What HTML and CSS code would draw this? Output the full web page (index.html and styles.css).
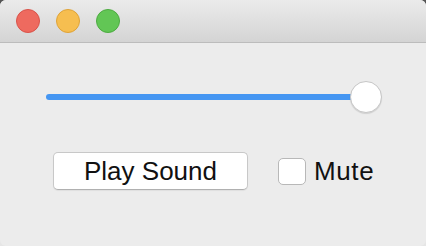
FILE: index.html
```html
<!DOCTYPE html>
<html>
<head>
<meta charset="utf-8">
<link rel="stylesheet" href="styles.css">
</head>
<body>
<div class="window">
  <div class="titlebar">
    <span class="light red"></span>
    <span class="light yellow"></span>
    <span class="light green"></span>
  </div>
  <div class="content">
    <div class="slider">
      <div class="track"></div>
      <div class="knob"></div>
    </div>
    <div class="controls">
      <button class="btn">Play Sound</button>
      <label class="check"><span class="box"></span><span class="label">Mute</span></label>
    </div>
  </div>
</div>
</body>
</html>
```

FILE: styles.css
```css
html, body {
  margin: 0;
  padding: 0;
}
body {
  width: 426px;
  height: 246px;
  background: linear-gradient(#555 0, #555 8px, #e6e6e6 8px);
  font-family: "Liberation Sans", Arial, sans-serif;
  overflow: hidden;
}
.window {
  width: 426px;
  height: 246px;
  background: #ececec;
  border-radius: 6px;
  overflow: hidden;
}
.titlebar {
  height: 42px;
  border-bottom: 1px solid #bcbcbc;
  background: linear-gradient(#ebebeb, #d4d4d4);
  display: flex;
  align-items: center;
  gap: 16px;
  padding-left: 16px;
}
.light {
  width: 22px;
  height: 22px;
  border-radius: 50%;
  box-sizing: content-box;
}
.red { background: #ee6a5f; border: 1px solid #d9534a; }
.yellow { background: #f6be50; border: 1px solid #dfa338; }
.green { background: #62c655; border: 1px solid #4dab41; }
.content {
  padding: 38px 44px 0 46px;
}
.slider {
  position: relative;
  height: 32px;
}
.track {
  position: absolute;
  left: 0;
  right: 16px;
  top: 13px;
  height: 6px;
  border-radius: 3px;
  background: #4596f2;
}
.knob {
  position: absolute;
  right: 0;
  top: 0;
  width: 30px;
  height: 30px;
  border-radius: 50%;
  background: #fff;
  border: 1px solid #c6c6c6;
  box-shadow: 0 1px 1px rgba(0,0,0,0.12);
}
.controls {
  display: flex;
  align-items: center;
  margin-top: 39px;
  margin-left: 7px;
}
.btn {
  width: 195px;
  height: 38px;
  box-sizing: border-box;
  background: #fff;
  border: 1px solid #c8c8c8;
  border-bottom-color: #b0b0b0;
  border-radius: 5px;
  font-family: "Liberation Sans", Arial, sans-serif;
  font-size: 26px;
  color: #111;
  padding: 0;
  line-height: 34px;
  box-shadow: 0 1px 1px rgba(0,0,0,0.06);
}
.check {
  display: flex;
  align-items: center;
  margin-left: 30px;
}
.box {
  width: 28px;
  height: 27px;
  box-sizing: border-box;
  background: #fff;
  border: 1px solid #b8b8b8;
  border-radius: 5px;
}
.label {
  margin-left: 8px;
  font-size: 26px;
  letter-spacing: 0.6px;
  color: #111;
}
```
